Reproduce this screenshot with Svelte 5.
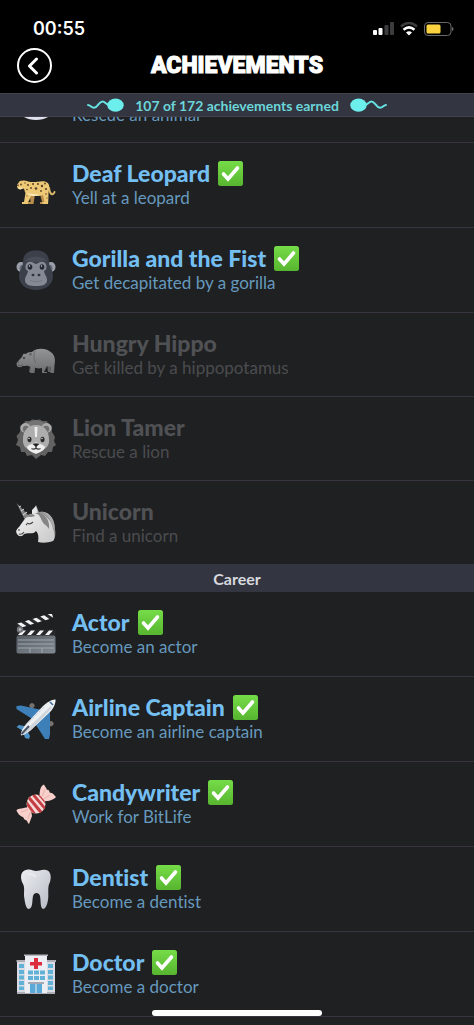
<script lang="ts">
	type Achievement = {
		icon: string;
		title?: string;
		text: string;
		earned: boolean;
	};

	const animals: Achievement[] = [
		{ icon: 'paw', text: 'Rescue an animal', earned: true },
		{ icon: 'leopard', title: 'Deaf Leopard', text: 'Yell at a leopard', earned: true },
		{ icon: 'gorilla', title: 'Gorilla and the Fist', text: 'Get decapitated by a gorilla', earned: true },
		{ icon: 'hippo', title: 'Hungry Hippo', text: 'Get killed by a hippopotamus', earned: false },
		{ icon: 'lion', title: 'Lion Tamer', text: 'Rescue a lion', earned: false },
		{ icon: 'unicorn', title: 'Unicorn', text: 'Find a unicorn', earned: false }
	];

	const career: Achievement[] = [
		{ icon: 'clapper', title: 'Actor', text: 'Become an actor', earned: true },
		{ icon: 'plane', title: 'Airline Captain', text: 'Become an airline captain', earned: true },
		{ icon: 'candy', title: 'Candywriter', text: 'Work for BitLife', earned: true },
		{ icon: 'tooth', title: 'Dentist', text: 'Become a dentist', earned: true },
		{ icon: 'hospital', title: 'Doctor', text: 'Become a doctor', earned: true }
	];

	const earnedCount = 107;
	const totalCount = 172;
</script>

{#snippet swimmer()}
	<svg class="swimmer" viewBox="0 0 37 14" aria-hidden="true">
		<path
			d="M1 7C3.500 7 4 9.800 7 9.800C11 9.800 11.500 3.500 15.500 3.500C18.500 3.500 18.500 7 23 7"
			fill="none"
			stroke="#67e3e4"
			stroke-width="1.900"
			stroke-linecap="round"
		/>
		<ellipse cx="28.500" cy="7.200" rx="8.200" ry="6.600" fill="#6ceeed" />
	</svg>
{/snippet}

{#snippet picture(name: string)}
	<svg class="picture" viewBox="0 0 40 40" aria-hidden="true">
		{#if name === 'paw'}
			<ellipse cx="20" cy="30" rx="17" ry="10" fill="#dfe2ee" />
		{:else if name === 'leopard'}
			<path d="M33 23C34 30 37 31 38.500 27" fill="none" stroke="#dcb86a" stroke-width="2" stroke-linecap="round" />
			<path d="M14 28L14.500 37H11.500V39H17.500L19 29ZM24 29L26 37H24V39H29L29.500 29Z" fill="#b98d4a" />
			<path
				d="M3 17C4 15 6 16 7 15.500C10 15 12 17 15 17C20 17.500 25 15.500 29 16.500C33 17.500 34 21 33 25C32 28 33 31 32 39H26.500V37H28.500L27 30C23 31.500 19 31 16 29.500L12 37.500L12 39H6V37H8L9.500 28C8 26 9 24 7.500 23.500L4 24.500C1.500 24 .8 22.500 1 20Z"
				fill="#edc875"
			/>
			<path d="M9 26C12 30 17 28 24 30C18 32 14 31 12 29ZM1.500 22C3 23 5 22 7 23L4 24.500Z" fill="#fae8b8" />
			<g fill="#5c4227">
				<circle cx="5" cy="19.500" r=".9" /><circle cx="9" cy="18" r=".7" /><circle cx="12" cy="20" r="1" />
				<circle cx="15" cy="23" r=".9" /><circle cx="17" cy="19" r="1" /><circle cx="20" cy="23.500" r="1.300" />
				<circle cx="22" cy="19" r="1" /><circle cx="26" cy="21" r="1.200" /><circle cx="29" cy="18.500" r=".9" />
				<circle cx="30" cy="24" r="1.100" /><circle cx="25" cy="26" r=".9" /><circle cx="30" cy="29" r=".8" />
				<circle cx="11" cy="24.500" r=".8" /><circle cx="11" cy="31" r=".6" /><circle cx="31" cy="33" r=".6" />
			</g>
			<path d="M1 20L3 19.500L2 21.500Z" fill="#34281e" />
		{:else if name === 'gorilla'}
			<ellipse cx="5" cy="17" rx="4.500" ry="5" fill="#9b9fa9" />
			<ellipse cx="35" cy="17" rx="4.500" ry="5" fill="#9b9fa9" />
			<ellipse cx="6" cy="18" rx="2.500" ry="3" fill="#686c76" />
			<ellipse cx="34" cy="18" rx="2.500" ry="3" fill="#686c76" />
			<path d="M20 .5C29 .5 33 5 33 12C33 17 37 20 37 26C37 35 29 40 20 40S3 35 3 26C3 20 7 17 7 12C7 5 11 .5 20 .5Z" fill="#3c404a" />
			<path d="M9 12C11 5 29 5 31 12C28 9 25 12 20 12S12 9 9 12Z" fill="#484c57" />
			<path d="M13 12C16 11 18 14 20 14S24 11 27 12C31 12 32 20 28 21C28 24 31 26 31 30C31 35 26 36 20 36S9 35 9 30C9 26 12 24 12 21C8 20 9 12 13 12Z" fill="#858993" />
			<path d="M14 30.500C17 32 23 32 26 30.500" fill="none" stroke="#747882" stroke-width="1" />
			<ellipse cx="14" cy="17" rx="2.300" ry="2.800" fill="#252932" /><ellipse cx="26" cy="17" rx="2.300" ry="2.800" fill="#252932" />
			<circle cx="13.500" cy="16" r=".7" fill="#d8dae0" /><circle cx="25.500" cy="16" r=".7" fill="#d8dae0" />
			<ellipse cx="17" cy="25" rx="1.500" ry="1.200" fill="#30343d" /><ellipse cx="23" cy="25" rx="1.500" ry="1.200" fill="#30343d" />
		{:else if name === 'hippo'}
			<path d="M14 31L13 37H17L20 31ZM31 29L32 37H35L34 29Z" fill="#606162" />
			<path
				d="M.5 29C1 26 5 24 6.500 21C7 18 9 19 10 19C12 17 14 17 16 17C21 12 31 13 36 18C39 21 39.500 25 38.500 30L38 38H34.500L34.500 32L31 31L28 37H31V38H26L26 33C22 34 20 33 19 32.500L18.500 38H14L15 32C11 30 10 31 7 31C4 33 1 33 .5 29Z"
				fill="url(#hide)"
			/>
			<path d="M19 16C17 20 18 26 20 28" fill="none" stroke="#686a6b" stroke-width="1" />
			<path d="M13 20C13 17 15 17 16 19L15 21Z" fill="#646667" />
			<path d="M2 30C4 31.500 5 30 7 30" fill="none" stroke="#595a5b" />
			<circle cx="8" cy="23" r=".9" fill="#28292a" /><circle cx="2.500" cy="27" r=".6" fill="#48494a" />
		{:else if name === 'lion'}
			<path
				d="M20 1L24 .5L26 2L31 2L32 5L36 7L36 13L39 18L38 22L40 26L37 28L36 33L32 33L29 37L25 36L20 40L16 36L11 37L9 33L5 33L4 28L0 26L2 21L.5 17L4 13L4 7L8 5L9 2L14 2L16 .5Z"
				fill="#626262"
			/>
			<path d="M13 3L20 1L27 3L30 9H10Z" fill="#747474" />
			<circle cx="9.500" cy="9" r="5" fill="#aaaaaa" /><circle cx="30.500" cy="9" r="5" fill="#aaaaaa" />
			<circle cx="10" cy="10" r="3.200" fill="#707070" /><circle cx="30" cy="10" r="3.200" fill="#707070" />
			<path d="M20 6C29 6 33 13 33 20C34 27 29 32 20 33C11 32 6 27 7 20C7 13 11 6 20 6Z" fill="#adadad" />
			<path d="M18.500 8H21.500L21 18H19ZM11 28C13 25 17 25 20 23C23 25 27 25 29 28C28 32 24 33 20 35C16 33 12 32 11 28Z" fill="#eeeeee" />
			<ellipse cx="13.500" cy="20.500" rx="2" ry="2.800" fill="#282828" /><ellipse cx="26.500" cy="20.500" rx="2" ry="2.800" fill="#282828" />
			<circle cx="13" cy="19.500" r=".7" fill="#eee" /><circle cx="26" cy="19.500" r=".7" fill="#eee" />
			<path d="M16.500 25Q20 23.500 23.500 25L20 28Z" fill="#242424" />
			<path d="M20 27V29M15.500 29.500Q18 31 20 29Q22 31 24.500 29.500" fill="none" stroke="#363636" stroke-width="1.200" />
		{:else if name === 'unicorn'}
			<path d="M.5 0L14 14L9 17Z" fill="#858585" />
			<path d="M3 4L5 3M5 8L8 6M7 12L11 9" stroke="#ddd" stroke-width="1" />
			<path d="M17 8L20 2L23 9C33 7 39 17 39 26C40 32 39 37 36 38L31 27L21 12Z" fill="#929292" />
			<path
				d="M16 13L16 7L20 3L22 10C31 11 36 20 37 26C39 31 39 36 37 38C32 40 26 40 22 39C23 33 22 30 20 28C17 32 12 29 8 31C6 34 3 34 1 31C-1 28 1 26 3 24L8 17C10 14 13 13 16 13Z"
				fill="url(#mane)"
			/>
			<path d="M18 11C23 10 24 14 26 18C28 22 31 22 33 26C34 18 30 11 22 9.500Z" fill="#858585" />
			<path d="M25 8.500C34 12 35 20 38 27C40 20 36 9 25 8.500Z" fill="#aaa" />
			<path d="M10 14C13 10 17 10 19 13L16 14Z" fill="#8c8c8c" />
			<path d="M11 20Q14 22 17 19M11 21L10 22M3 31Q6 32 8 29" fill="none" stroke="#4c4c4c" stroke-width="1.200" />
			<circle cx="3" cy="27" r=".9" fill="#666" />
		{:else if name === 'clapper'}
			<g transform="rotate(-17 4 15)">
				<rect x="2" y="9" width="37" height="5" fill="#292a2d" />
				<path d="M3 9H7L11 14H7ZM11 9H15L19 14H15ZM19 9H23L27 14H23ZM27 9H31L35 14H31ZM35 9H39V14Z" fill="#f4f4f4" />
			</g>
			<rect x=".5" y="15.500" width="39" height="7" fill="#27282b" />
			<path d="M2 21L6 16.500H10L6 21ZM11 21L15 16.500H19L15 21ZM20 21L24 16.500H28L24 21ZM29 21L33 16.500H37L33 21Z" fill="#f4f4f4" />
			<rect x=".5" y="21.500" width="39" height="18" rx="2" fill="url(#slate)" />
			<path d="M2 26H38M2 30H38M2 34H38M14 34V39M26 34V39" stroke="#a5adb3" stroke-width=".9" />
			<circle cx="4" cy="15.500" r="3.200" fill="#75767d" /><circle cx="4" cy="15.500" r="1.300" fill="#bbb" />
		{:else if name === 'plane'}
			<rect x="14" y="4" width="5" height="5" rx="2" transform="rotate(45 16 6)" fill="#77716f" />
			<rect x="33" y="22" width="5" height="5" rx="2" transform="rotate(45 35 24)" fill="#77716f" />
			<path d="M.5 7L5 6.500L26 11L18 21L.5 10Z" fill="#3d80b9" /><path d="M34 13L34 35L33 40L29 40L18 23Z" fill="#3d80b9" />
			<path d="M.5 28L3 26L13 28L9 33ZM11 31L14 37L13 40L9 39L7 32Z" fill="#4d93c9" />
			<path d="M39.500 .5C40 3 38 9 34 13L15 31C11 34 7 37 5 36C4 34 7 29 10 25L27 7C31 3 37 0 39.500 .5Z" fill="#edf0f3" />
			<path d="M36 9L15 31C11 34 7 37 5 36L13 28L35 7Z" fill="#d0d5dc" />
			<path d="M34 3L37 6" stroke="#416c99" stroke-width="1.600" />
			<path d="M28 8L9 27" stroke="#a9b3c0" stroke-width=".8" stroke-dasharray="1 1" />
			<path d="M5.500 35L13 27" stroke="#465264" stroke-width="2" />
		{:else if name === 'candy'}
			<path d="M24 14C23 9 24 2 28 .5C29 3 30 3 31 6C33 5 33 7 34 9C36 8 39 12 40 13C37 17 30 17 26 18Z" fill="#f8cfca" />
			<path d="M15 26L16 32L13 40C11 39 12 37 10 36C8 36 8 34 7 33C5 33 1 29 .5 26C4 24 10 24 13 23Z" fill="#f8cfca" />
			<path d="M25 15L29 5M26 16L34 11M14 25L5 28M15 26L12 35" stroke="#e8b0ac" stroke-width="1" />
			<circle cx="20" cy="20" r="9.500" fill="#f4ddd8" />
			<path d="M11 17L20 29.500L16 28.500L11 22ZM14 12.500L26.500 27.500L23.500 29L12 15ZM19 10.500L29.500 23L28 25.500L16 11.500ZM24 11.500L28.500 16.500L29.500 20L21.500 10.600Z" fill="#c53e43" />
		{:else if name === 'tooth'}
			<path
				d="M11 .8C15 0 17 2 20 2S26 0 30 1C35 2 35.500 8 34 13C31 18 33 25 32 31C31 37 29 40 27 40C24 39 25 31 24 27C23 23 18 23 17 27C16 32 17 39 13 40C10 40 9 34 8 27C8 20 9 18 6 13C4 7 5 2 11 .8Z"
				fill="url(#enamel)"
			/>
			<path d="M12 5Q18 5 20 8" fill="none" stroke="#fff" stroke-width="1.500" opacity=".4" />
		{:else if name === 'hospital'}
			<rect x="1" y="7" width="38" height="32" fill="#d9dce5" />
			<path d="M.5 6H40V8H.5ZM1 38H39V40H1Z" fill="#afadb5" />
			<rect x="9" y="1" width="22" height="38" fill="#eceef3" />
			<path d="M8 .5H32V2H8Z" fill="#b8b6be" />
			<path d="M18 4H22V8H26V11.500H22V15H18V11.500H14V8H18Z" fill="#dd2c3b" />
			<path d="M3 10H8V14H3ZM3 16H8V20H3ZM3 21.500H8V25.500H3ZM3 27H8V31H3ZM3 32.500H8V36H3ZM32 10H37V14H32ZM32 16H37V20H32ZM32 21.500H37V25.500H32ZM32 27H37V31H32ZM32 32.500H37V36H32ZM12 16.500H17V20.500H12ZM18 16.500H23V20.500H18ZM24 16.500H29V20.500H24ZM12 22H17V26H12ZM18 22H23V26H18ZM24 22H29V26H24Z" fill="#62b2d8" />
			<path d="M12 28H28V30H12Z" fill="#a4a8b2" />
			<path d="M14 30H19.500V39H14ZM20.500 30H26V39H20.500Z" fill="#5aa9d6" />
		{/if}
	</svg>
{/snippet}

{#snippet rows(items: Achievement[])}
	<ul>
		{#each items as item}
			<li class:locked={!item.earned}>
				{@render picture(item.icon)}
				<div class="copy">
					{#if item.title}
						<h3>
							{item.title}
							{#if item.earned}
								<svg class="check" viewBox="0 0 25 25" role="img" aria-label="Earned">
									<rect width="25" height="25" rx="2.500" fill="url(#green)" />
									<path d="M5.500 13L10 18L19.500 7" fill="none" stroke="#fff" stroke-width="3.600" stroke-linecap="round" />
								</svg>
							{/if}
						</h3>
					{/if}
					<p>{item.text}</p>
				</div>
			</li>
		{/each}
	</ul>
{/snippet}

<svg class="defs" aria-hidden="true">
	<defs>
		<linearGradient id="green" x2="0" y2="1"><stop stop-color="#76dc48" /><stop offset="1" stop-color="#57b52f" /></linearGradient>
		<linearGradient id="hide" x2="0" y2="1"><stop stop-color="#929495" /><stop offset="1" stop-color="#6c6e6f" /></linearGradient>
		<linearGradient id="mane" x2="1" y2="1"><stop stop-color="#f5f5f5" /><stop offset="1" stop-color="#c8c8c8" /></linearGradient>
		<linearGradient id="slate" x2="1" y2="1"><stop stop-color="#565c62" /><stop offset="1" stop-color="#838b92" /></linearGradient>
		<linearGradient id="enamel" x2="1" y2="1"><stop stop-color="#eceef2" /><stop offset="1" stop-color="#b6bac3" /></linearGradient>
	</defs>
</svg>

<div class="screen">
	<header>
		<div class="status">
			<time>00:55</time>
			<div class="indicators">
				<svg width="21" height="14" viewBox="0 0 21 14" role="img" aria-label="Signal">
					<rect y="8" width="4" height="5" rx="1" fill="#fff" />
					<rect x="5.500" y="6" width="4" height="7" rx="1" fill="#fff" />
					<rect x="11.500" y="3" width="4" height="10" rx="1" fill="#3c3c3e" />
					<rect x="17" y="0" width="4" height="13" rx="1" fill="#3c3c3e" />
				</svg>
				<svg width="18" height="14" viewBox="0 0 18 14" role="img" aria-label="Wi-Fi">
					<path d="M1 4.500Q9 -2.500 17 4.500" fill="none" stroke="#3c3c3e" stroke-width="2.500" />
					<path d="M3.500 7.800Q9 3 14.500 7.800" fill="none" stroke="#fff" stroke-width="2.500" />
					<path d="M6 10.500Q9 8 12 10.500L9 13.500Z" fill="#fff" />
				</svg>
				<svg width="30" height="14" viewBox="0 0 30 14" role="img" aria-label="Battery">
					<rect x=".5" y=".5" width="26.500" height="13" rx="3.500" fill="none" stroke="#6a6a6d" />
					<rect x="2.500" y="2.500" width="14" height="9" rx="1.500" fill="#fbd340" />
					<path d="M28 5Q29.500 5 29.500 7T28 9Z" fill="#6a6a6d" />
				</svg>
			</div>
		</div>
		<div class="bar">
			<button aria-label="Back">
				<svg width="12" height="18" viewBox="0 0 12 18">
					<path d="M9.500 2L2.500 9L9.500 16" fill="none" stroke="#fff" stroke-width="3" stroke-linecap="round" stroke-linejoin="round" />
				</svg>
			</button>
			<h1>Achievements</h1>
		</div>
		<div class="progress">
			{@render swimmer()}
			<span>{earnedCount} of {totalCount} achievements earned</span>
			<span class="flip">{@render swimmer()}</span>
		</div>
	</header>

	<main>
		<section class="scrolled">{@render rows(animals)}</section>
		<section>
			<h2>Career</h2>
			{@render rows(career)}
		</section>
	</main>

	<div class="home"></div>
</div>

<style>
	:global(body) {
		margin: 0;
		background: #1f2022;
	}

	.defs {
		position: absolute;
		width: 0;
		height: 0;
	}

	.screen {
		display: flex;
		flex-direction: column;
		height: 100vh;
		overflow: hidden;
		font-family: Lato, 'Open Sans', sans-serif;
		font-variant-ligatures: none;
		background: #1f2022;
	}

	header {
		flex: none;
		z-index: 1;
		background: #000;
		color: #fff;
	}

	.status {
		display: flex;
		justify-content: space-between;
		align-items: center;
		padding: 19px 20px 7px 33px;
	}

	time {
		font: 600 18px/20px Inter, sans-serif;
	}

	.indicators {
		display: flex;
		align-items: center;
		gap: 6px;
	}

	.bar {
		display: grid;
		grid-template-columns: 35px 1fr 35px;
		align-items: center;
		padding: 2px 17px 10px;
	}

	button {
		display: grid;
		place-items: center;
		width: 35px;
		height: 35px;
		padding: 0 3px 0 0;
		border: 2px solid #fff;
		border-radius: 50%;
		background: none;
	}

	h1 {
		margin: 0;
		font: 900 23px/30px Roboto, sans-serif;
		text-align: center;
		text-transform: uppercase;
		-webkit-text-stroke: 1px #fff;
	}

	.progress {
		display: flex;
		justify-content: center;
		align-items: center;
		gap: 11px;
		height: 22px;
		border: solid #41424d;
		border-width: 1px 0;
		background: #333541;
		color: #6bd5d9;
		font-size: 14px;
		font-weight: 700;
	}

	.swimmer {
		display: block;
		width: 37px;
		height: 14px;
	}

	.flip {
		transform: scaleX(-1);
	}

	main {
		flex: 1;
		min-height: 0;
		overflow: hidden;
	}

	/* the list is scrolled part of the way through its first row */
	.scrolled {
		margin-top: -59px;
	}

	h2 {
		margin: 0;
		background: #333541;
		color: #d8d9df;
		font-size: 16px;
		line-height: 27px;
		text-align: center;
	}

	ul {
		margin: 0;
		padding: 0;
		list-style: none;
	}

	li {
		display: flex;
		align-items: center;
		gap: 16px;
		height: 84px;
		padding: 0 16px;
		border-bottom: 1px solid #39323f;
		color: #74bff2;
	}

	.locked {
		height: 83px;
		color: #505154;
	}

	.scrolled li:last-child {
		border-color: #333541;
	}

	.picture {
		flex: none;
		width: 40px;
		height: 40px;
	}

	.copy {
		min-width: 0;
		padding-bottom: 4px;
	}

	.copy:not(:has(h3)) {
		padding-top: 34px;
	}

	h3 {
		display: flex;
		align-items: center;
		gap: 8px;
		margin: 0;
		font-size: 23px;
		font-weight: 900;
		line-height: 30px;
	}

	.check {
		flex: none;
		width: 25px;
		height: 25px;
	}

	p {
		margin: 0;
		color: #6699bd;
		font-size: 17px;
		line-height: 20px;
	}

	.locked p {
		color: #4b4c4f;
	}

	.home {
		position: fixed;
		bottom: 9px;
		left: 50%;
		width: 170px;
		height: 6px;
		border-radius: 3px;
		background: #fff;
		transform: translateX(-50%);
	}
</style>
